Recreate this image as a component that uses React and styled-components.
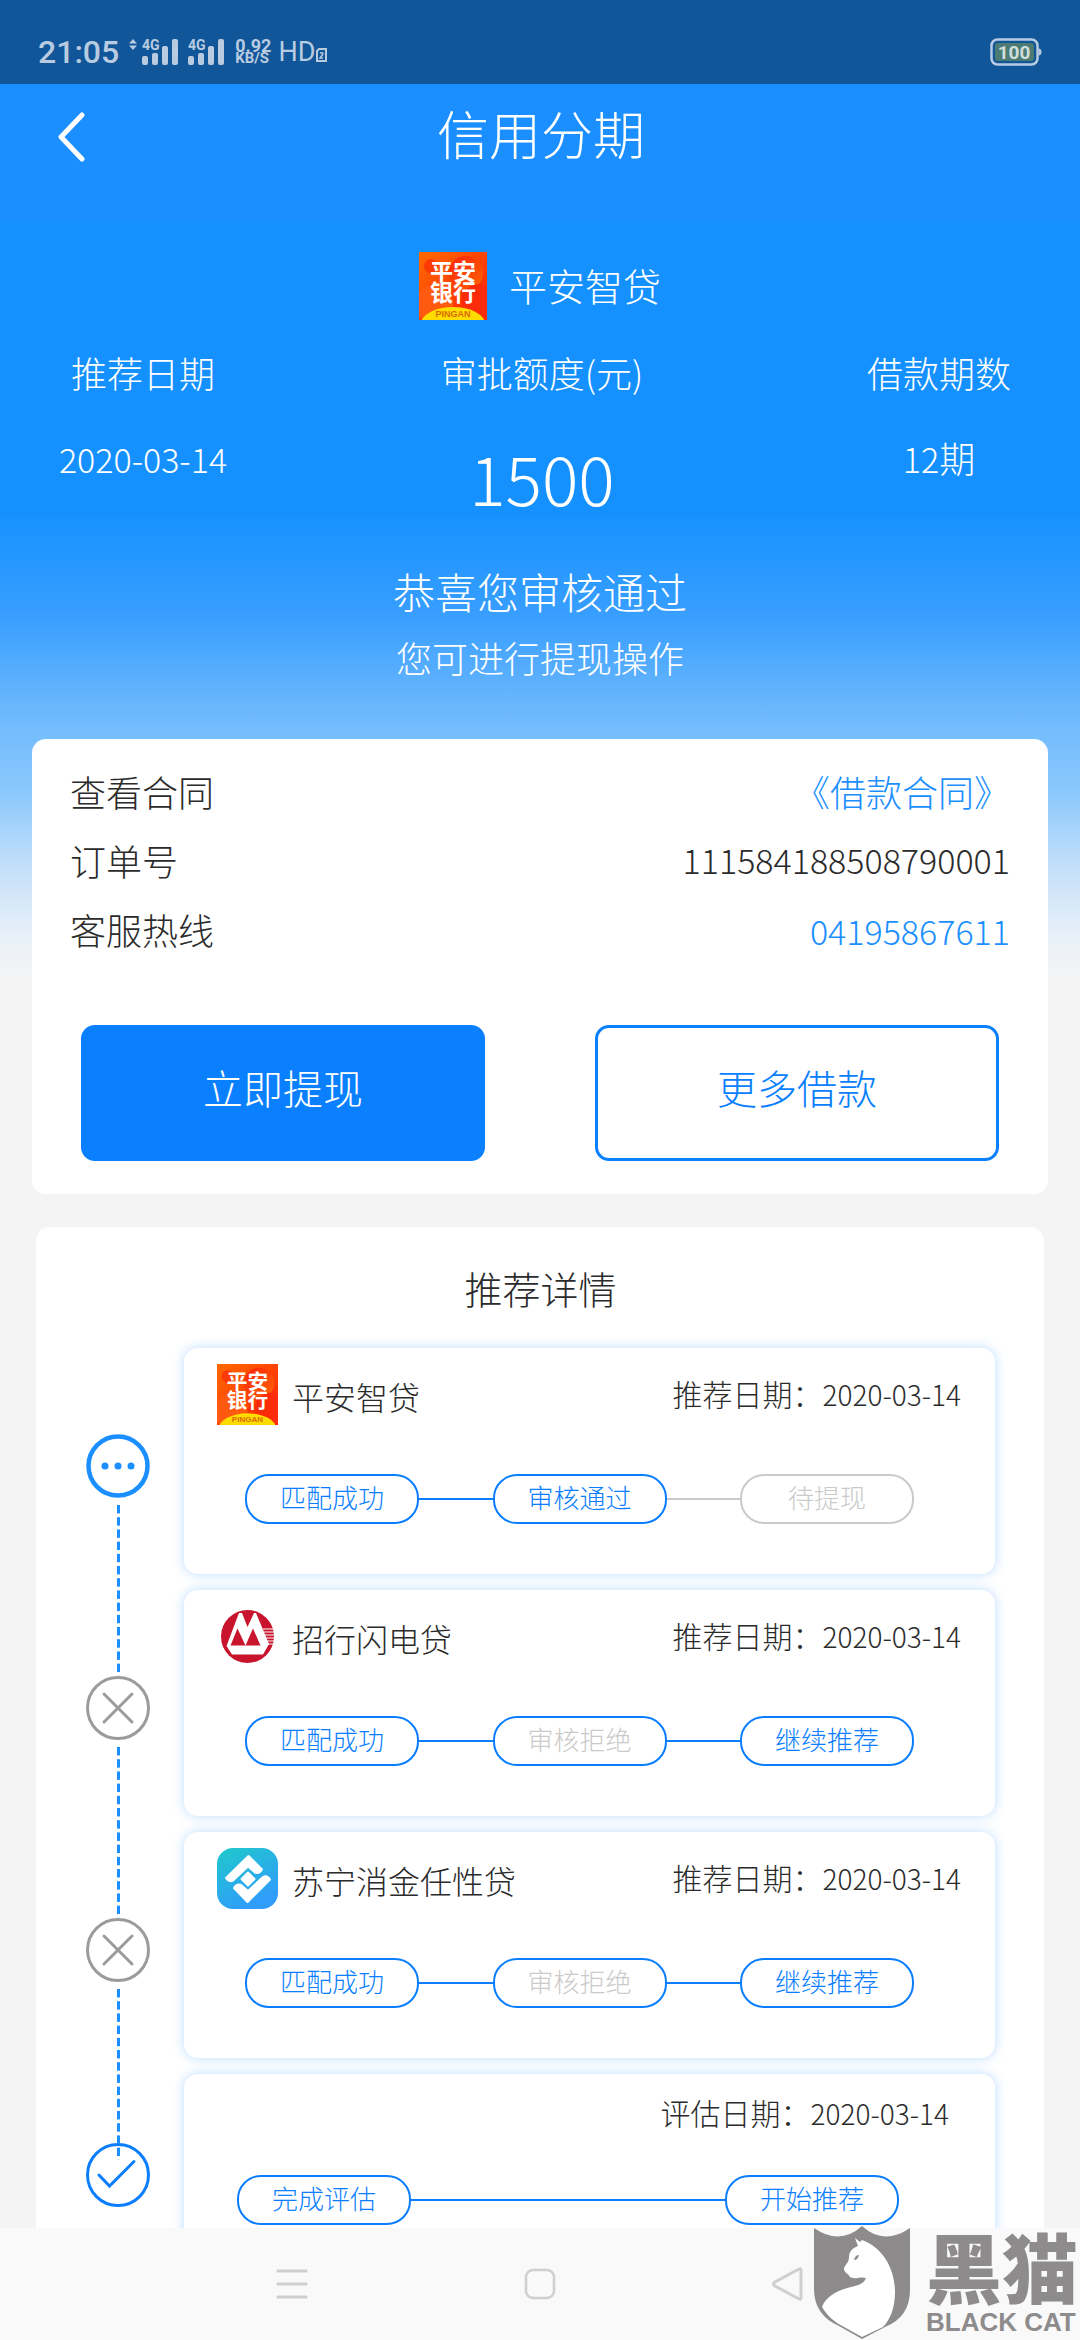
import React from "react";
import styled, { createGlobalStyle } from "styled-components";

const GlobalStyle = createGlobalStyle`
  * {
    box-sizing: border-box;
  }

  body {
    margin: 0;
    background: #f4f4f4;
    color: #2b2b2b;
    font-family: "Noto Sans CJK SC", "Noto Sans", sans-serif;
    font-weight: 300;
  }

  p, h1, h2, dl, dt, dd, ol {
    margin: 0;
    padding: 0;
    font-weight: inherit;
  }
`;

const Phone = styled.div`
  display: flex;
  flex-direction: column;
  height: 100vh;
  overflow: hidden;
`;

const StatusBar = styled.header`
  display: flex;
  flex: none;
  align-items: center;
  height: 84px;
  padding: 20px 38px 0;
  background: #115698;
  color: #b8cbe1;
  font-family: Roboto, sans-serif;
  font-weight: 500;
`;

const Clock = styled.span`
  margin-right: 9px;
  font-size: 32px;
  line-height: 32px;
`;

const Speed = styled.span`
  display: flex;
  flex-direction: column;
  margin: 0 7px 0 8px;
  font-size: 18px;
  font-weight: 700;
  line-height: 13px;

  small {
    font-size: 15px;
  }
`;

const Hd = styled.span`
  flex: 1;
  display: flex;
  align-items: center;
  gap: 1px;
  font-size: 27px;
  font-weight: 400;
  line-height: 28px;

  svg {
    margin-top: 6px;
  }
`;

const AppBar = styled.div`
  display: grid;
  flex: none;
  grid-template-columns: 100px 1fr 98px;
  align-items: center;
  height: 136px;
  padding-bottom: 30px;
  background: #1b8fff;
  color: #fff;
  text-align: center;
`;

const BackButton = styled.button`
  display: flex;
  justify-content: flex-end;
  padding: 0 14px;
  border: 0;
  background: none;
  color: inherit;
`;

const PageTitle = styled.h1`
  padding-bottom: 8px;
  font-size: 52px;
  line-height: 60px;
`;

const Content = styled.main`
  flex: 1;
  min-height: 0;
  overflow: hidden;
  background: linear-gradient(
      #1491ff 0,
      #1491ff 290px,
      #3a9fff 400px,
      #6cb8fd 490px,
      #8ac8fc 570px,
      #c5e0fa 650px,
      #e8f0f8 715px,
      #f4f4f4 760px
    )
    no-repeat;
`;

const Hero = styled.section`
  height: 519px;
  padding-top: 32px;
  color: #fff;
  text-align: center;
`;

const Product = styled.div`
  display: flex;
  align-items: center;
  justify-content: center;
  gap: 22px;
  font-size: 38px;

  span {
    padding-bottom: 4px;
  }
`;

const Facts = styled.dl`
  display: grid;
  grid-template-columns: 286px 1fr 282px;
  margin-top: 26px;
  font-size: 36px;

  dt {
    line-height: 52px;
  }

  dd {
    margin-top: 33px;
    line-height: 52px;
  }
`;

const Digits = styled.span`
  font-size: ${({ $size }) => $size || 34}px;
`;

const Amount = styled(Digits)`
  display: block;
  padding-top: 10px;
  line-height: 72px;
`;

const Congrats = styled.p`
  margin-top: 48px;
  font-size: 42px;
  line-height: 60px;
`;

const Hint = styled.p`
  margin-top: 10px;
  font-size: 36px;
  line-height: 52px;
`;

const OrderCard = styled.section`
  margin: 0 32px;
  padding: 17px 38px 33px;
  border-radius: 14px;
  background: #fff;
`;

const OrderRow = styled.div`
  display: flex;
  align-items: center;
  justify-content: space-between;
  height: 69px;
  font-size: 36px;

  a {
    color: #1b8fff;
    text-decoration: none;
  }
`;

const Actions = styled.div`
  display: flex;
  justify-content: space-between;
  margin-top: 62px;
  padding: 0 11px;
`;

const ActionButton = styled.button`
  width: 44%;
  height: 136px;
  padding: 0 0 12px;
  border: 3px solid #0a80ff;
  border-radius: 14px;
  background: ${({ $primary }) => ($primary ? "#0a80ff" : "#fff")};
  color: ${({ $primary }) => ($primary ? "#fff" : "#0a80ff")};
  font: inherit;
  font-size: 40px;
`;

const DetailCard = styled.section`
  margin: 33px 36px 0;
  padding: 35px 49px 60px 50px;
  border-radius: 14px;
  background: #fff;
`;

const DetailTitle = styled.h2`
  font-size: 38px;
  line-height: 52px;
  text-align: center;
`;

const Timeline = styled.div`
  display: grid;
  grid-template-columns: 64px 1fr;
  gap: 34px;
  margin-top: 34px;
`;

const Rail = styled.div`
  display: flex;
  flex-direction: column;
  align-items: center;
  padding-top: 86px;

  svg {
    flex: none;
  }
`;

const Dashes = styled.div`
  position: relative;
  flex: none;
  width: 3px;
  height: 171px;
  margin-top: 7px;
  background: linear-gradient(#1b8fff 66%, transparent 66%) 0 0 / 3px 12px;
  background-repeat: round;

  /* the last run of dashes reaches into the tick */
  &:last-of-type {
    margin-bottom: -17px;
  }
`;

const Steps = styled.ol`
  display: grid;
  gap: 16px;
  list-style: none;
`;

const Step = styled.li`
  height: 226px;
  padding: ${({ $last }) => ($last ? "16px 46px 0 53px" : "15px 34px 0 33px")};
  border-radius: 14px;
  box-shadow: 0 0 12px rgba(27, 143, 255, 0.3);
`;

const StepHead = styled.div`
  display: flex;
  align-items: center;
  gap: 14px;
  min-height: ${({ $last }) => ($last ? 46 : 62)}px;
`;

const StepName = styled.span`
  padding-top: 4px;
  font-size: 32px;
`;

const StepDate = styled.span`
  margin-left: auto;
  padding-bottom: 2px;
  font-size: 30px;
`;

const Flow = styled.div`
  display: flex;
  align-items: center;
  margin-top: ${({ $last }) => ($last ? 39 : 49)}px;
  padding: ${({ $last }) => ($last ? "0 50px 0 0" : "0 47px 0 28px")};
`;

const Pill = styled.span`
  width: 174px;
  height: 50px;
  border: 2px solid ${({ $grey }) => ($grey ? "#cacaca" : "#0a7eff")};
  border-radius: 24px;
  color: ${({ $muted }) => ($muted ? "#cacaca" : "#0a7eff")};
  font-size: 26px;
  line-height: 41px;
  text-align: center;
`;

const Link = styled.span`
  flex: 1;
  height: 2px;
  background: ${({ $grey }) => ($grey ? "#cacaca" : "#0a7eff")};
`;

const NavBar = styled.nav`
  position: relative;
  display: grid;
  flex: none;
  grid-template-columns: repeat(3, 248px);
  justify-content: center;
  align-items: center;
  height: 112px;
  background: #f9f9f9;
`;

const NavButton = styled.button`
  display: flex;
  justify-content: center;
  padding: 0;
  border: 0;
  background: none;
`;

const Watermark = styled.div`
  position: absolute;
  right: 2px;
  bottom: 0;
  display: flex;
  gap: 15px;
  color: #8e8b8c;
`;

const Brand = styled.div`
  display: flex;
  flex-direction: column;
  font-size: 76px;
  font-weight: 900;
  line-height: 81px;

  small {
    font-family: "Liberation Sans", sans-serif;
    font-size: 26px;
    font-weight: 700;
    line-height: 32px;
  }
`;

function Signal({ arrows }) {
  return (
    <svg width={arrows ? 53 : 46} height="28" viewBox={arrows ? "-14 0 53 28" : "-7 0 46 28"} fill="currentColor">
      {arrows && <path d="M-9 1l4 4.500h-8zM-9 12l4-4.500h-8z" />}
      <text x="0" y="12" fontSize="14" fontWeight="700">4G</text>
      <rect x="0" y="18" width="6" height="9" rx="2" />
      <rect x="10" y="15" width="6" height="12" rx="2" />
      <rect x="20" y="8" width="6" height="19" rx="2" />
      <rect x="30" y="1" width="6" height="26" rx="2" />
    </svg>
  );
}

function Battery() {
  return (
    <svg width="52" height="28" viewBox="0 0 52 28">
      <rect x="1.500" y="1.500" width="46" height="25" rx="6" fill="none" stroke="#b8cbe1" strokeWidth="2.500" />
      <rect x="5" y="5" width="39" height="18" rx="3" fill="#4b7b73" />
      <path d="M48.500 10.500a3 3.500 0 0 1 0 7z" fill="#b8cbe1" />
      <text x="24" y="21" textAnchor="middle" fontSize="19" fontWeight="700" fill="#d0dedb">100</text>
    </svg>
  );
}

function PinganLogo({ size }) {
  return (
    <svg width={size} height={size} viewBox="0 0 68 68">
      <defs>
        <linearGradient id="pa" x1="0" y1="0" x2="1" y2="1">
          <stop offset="0" stopColor="#ff6a00" />
          <stop offset="1" stopColor="#fb1e06" />
        </linearGradient>
        <linearGradient id="pb" x1="0" y1="0" x2="1" y2="1">
          <stop offset="0" stopColor="#fb2205" />
          <stop offset="1" stopColor="#ff6508" />
        </linearGradient>
        <clipPath id="pc">
          <rect width="68" height="68" />
        </clipPath>
      </defs>
      <g clipPath="url(#pc)">
        <rect width="68" height="68" fill="url(#pa)" />
        <circle cx="47" cy="21" r="17" fill="url(#pb)" />
        <circle cx="12" cy="14" r="7" fill="#fb3a06" />
        <circle cx="15" cy="52" r="19" fill="#ff5a10" />
        <circle cx="60" cy="50" r="18" fill="#fb2c0a" />
        <ellipse cx="34" cy="72" rx="32" ry="17" fill="#ffdc00" />
        <g fill="#fff" fontFamily="Noto Sans CJK SC, sans-serif" fontSize="23" fontWeight="700" textAnchor="middle">
          <text x="34" y="28">平安</text>
          <text x="34" y="49">银行</text>
        </g>
        <text x="34" y="65" fill="#d96a00" fontFamily="Liberation Sans, sans-serif" fontSize="9" fontWeight="700" textAnchor="middle">PINGAN</text>
      </g>
    </svg>
  );
}

function CmbLogo() {
  return (
    <svg width="61" height="61" viewBox="0 0 61 61">
      <circle cx="30.500" cy="30.500" r="26.500" fill="#c8152d" />
      <path d="M9.500 40L22 7h3l5.500 14L37 7h2l13 31-6 10.500H15z" fill="#fff" />
      <path d="M13.500 39.500l7-17 8 17zM28.500 39.500l7.500-17 7.500 17z" fill="#c8152d" />
      <path d="M46 23h11M46 26h11M47 29h10M48 32h9M50 35h7M51 38h5" stroke="#fff" strokeWidth="1" />
    </svg>
  );
}

function SuningLogo() {
  return (
    <svg width="61" height="61" viewBox="0 0 61 61">
      <defs>
        <linearGradient id="sn" x1="0" y1="0" x2="0.500" y2="1">
          <stop offset="0" stopColor="#1fc9cb" />
          <stop offset="1" stopColor="#309cfb" />
        </linearGradient>
      </defs>
      <rect width="61" height="61" rx="16" fill="url(#sn)" />
      <g fill="#fff" stroke="#fff" strokeLinejoin="round" strokeWidth="2">
        <path d="M31.500 8L45 21.500q-3 5-7 3L31 18.500 16 32.500q-4 2-7-2.500z" />
        <path d="M30.500 54L17 40q3-5 7-3l7 6 15-14q4-2 7 2.500z" />
        <path d="M31 24.500l6.500 6.500-6.500 6.500-6.500-6.500z" />
      </g>
    </svg>
  );
}

function NodeIcon({ type }) {
  const color = type === "reject" ? "#9b9b9b" : type === "done" ? "#0a7eff" : "#1b8fff";
  return (
    <svg width="64" height="64" viewBox="0 0 64 64" fill="none" stroke={color} strokeWidth="3" strokeLinecap="round">
      <circle cx="32" cy="32" r={type === "pending" ? 29.5 : 30.5} strokeWidth={type === "pending" ? 4.5 : 3} />
      {type === "pending" && (
        <g fill={color} stroke="none">
          <circle cx="19" cy="32" r="3.500" />
          <circle cx="32" cy="32" r="3.500" />
          <circle cx="45" cy="32" r="3.500" />
        </g>
      )}
      {type === "reject" && <path d="M18 18l28 28M46 18L18 46" />}
      {type === "done" && <path d="M13 32l10.500 11L48 18.500" />}
    </svg>
  );
}

function CatShield() {
  return (
    <svg width="98" height="115" viewBox="0 0 98 115">
      <path d="M1 3q26 18 48-2 22 20 48 2v62q0 27-25 37l-23 12-23-13Q1 90 1 64z" fill="#8e8b8c" />
      <path
        d="M42 13l5 4 2-2c20 7 33 28 33 52 0 16-5 28-12 35L49 112 24 98Q14 91 9 82c5-13 20-18 33-21q9-2 11-8c-6-2-11 2-16-1-2-4-6-4-6-9 2-4 5-6 5-11 0-6 4-9 9-11z"
        fill="#fff"
      />
      <path d="M41 35q1-5 5-5-1 5-5 5z" fill="#8e8b8c" />
    </svg>
  );
}

const steps = [
  {
    name: "平安智贷",
    logo: <PinganLogo size={61} />,
    flow: [{ text: "匹配成功" }, { text: "审核通过" }, { text: "待提现", grey: true, muted: true }],
  },
  {
    name: "招行闪电贷",
    logo: <CmbLogo />,
    flow: [{ text: "匹配成功" }, { text: "审核拒绝", muted: true }, { text: "继续推荐" }],
  },
  {
    name: "苏宁消金任性贷",
    logo: <SuningLogo />,
    flow: [{ text: "匹配成功" }, { text: "审核拒绝", muted: true }, { text: "继续推荐" }],
  },
  {
    last: true,
    flow: [{ text: "完成评估" }, { text: "开始推荐" }],
  },
];

export default function App() {
  return (
    <Phone>
      <GlobalStyle />
      <StatusBar>
        <Clock>21:05</Clock>
        <Signal arrows />
        <Signal />
        <Speed>
          <span>0.92</span>
          <small>KB/S</small>
        </Speed>
        <Hd>
          HD
          <svg width="11" height="14" viewBox="0 0 11 14">
            <path d="M3 1h7v12H1V3z" fill="none" stroke="currentColor" strokeWidth="2" />
            <path d="M4 5q3-1 3 1L4 10h3" fill="none" stroke="currentColor" strokeWidth="1.500" />
          </svg>
        </Hd>
        <Battery />
      </StatusBar>

      <AppBar>
        <BackButton aria-label="返回">
          <svg width="28" height="50" viewBox="0 0 28 50" fill="none" stroke="currentColor" strokeWidth="5" strokeLinecap="round" strokeLinejoin="round">
            <path d="M24 3L3 25l21 22" />
          </svg>
        </BackButton>
        <PageTitle>信用分期</PageTitle>
      </AppBar>

      <Content>
        <Hero>
          <Product>
            <PinganLogo size={68} />
            <span>平安智贷</span>
          </Product>
          <Facts>
            <div>
              <dt>推荐日期</dt>
              <dd><Digits>2020-03-14</Digits></dd>
            </div>
            <div>
              <dt>审批额度(元)</dt>
              <dd><Amount $size={68}>1500</Amount></dd>
            </div>
            <div>
              <dt>借款期数</dt>
              <dd><Digits>12</Digits>期</dd>
            </div>
          </Facts>
          <Congrats>恭喜您审核通过</Congrats>
          <Hint>您可进行提现操作</Hint>
        </Hero>

        <OrderCard>
          <OrderRow>
            <span>查看合同</span>
            <a href="#contract">《借款合同》</a>
          </OrderRow>
          <OrderRow>
            <span>订单号</span>
            <Digits>111584188508790001</Digits>
          </OrderRow>
          <OrderRow>
            <span>客服热线</span>
            <a href="tel:04195867611"><Digits>04195867611</Digits></a>
          </OrderRow>
          <Actions>
            <ActionButton $primary>立即提现</ActionButton>
            <ActionButton>更多借款</ActionButton>
          </Actions>
        </OrderCard>

        <DetailCard>
          <DetailTitle>推荐详情</DetailTitle>
          <Timeline>
            <Rail>
              <NodeIcon type="pending" />
              <Dashes />
              <NodeIcon type="reject" />
              <Dashes />
              <NodeIcon type="reject" />
              <Dashes />
              <NodeIcon type="done" />
            </Rail>
            <Steps>
              {steps.map((step, i) => (
                <Step key={i} $last={step.last}>
                  <StepHead $last={step.last}>
                    {step.logo}
                    {step.name && <StepName>{step.name}</StepName>}
                    <StepDate>
                      {step.last ? "评估日期：" : "推荐日期："}
                      <Digits $size={28}>2020-03-14</Digits>
                    </StepDate>
                  </StepHead>
                  <Flow $last={step.last}>
                    {step.flow.map((item, j) => (
                      <React.Fragment key={j}>
                        {j > 0 && <Link $grey={item.grey} />}
                        <Pill $grey={item.grey} $muted={item.muted}>{item.text}</Pill>
                      </React.Fragment>
                    ))}
                  </Flow>
                </Step>
              ))}
            </Steps>
          </Timeline>
        </DetailCard>
      </Content>

      <NavBar>
        <NavButton aria-label="菜单">
          <svg width="34" height="32" viewBox="0 0 34 32" stroke="#cfcfcf" strokeWidth="3" strokeLinecap="round">
            <path d="M3 3h28M3 16h28M3 29h28" />
          </svg>
        </NavButton>
        <NavButton aria-label="主页">
          <svg width="32" height="32" viewBox="0 0 32 32" fill="none" stroke="#cfcfcf" strokeWidth="2.500">
            <rect x="2" y="2" width="28" height="28" rx="7" />
          </svg>
        </NavButton>
        <NavButton aria-label="后退">
          <svg width="34" height="36" viewBox="0 0 34 36" fill="none" stroke="#cfcfcf" strokeWidth="3" strokeLinejoin="round">
            <path d="M30 4v28q0 2-2 1L4 20q-3-2 0-4L28 3q2-1 2 1z" />
          </svg>
        </NavButton>
        <Watermark>
          <CatShield />
          <Brand>
            黑猫
            <small>BLACK CAT</small>
          </Brand>
        </Watermark>
      </NavBar>
    </Phone>
  );
}
